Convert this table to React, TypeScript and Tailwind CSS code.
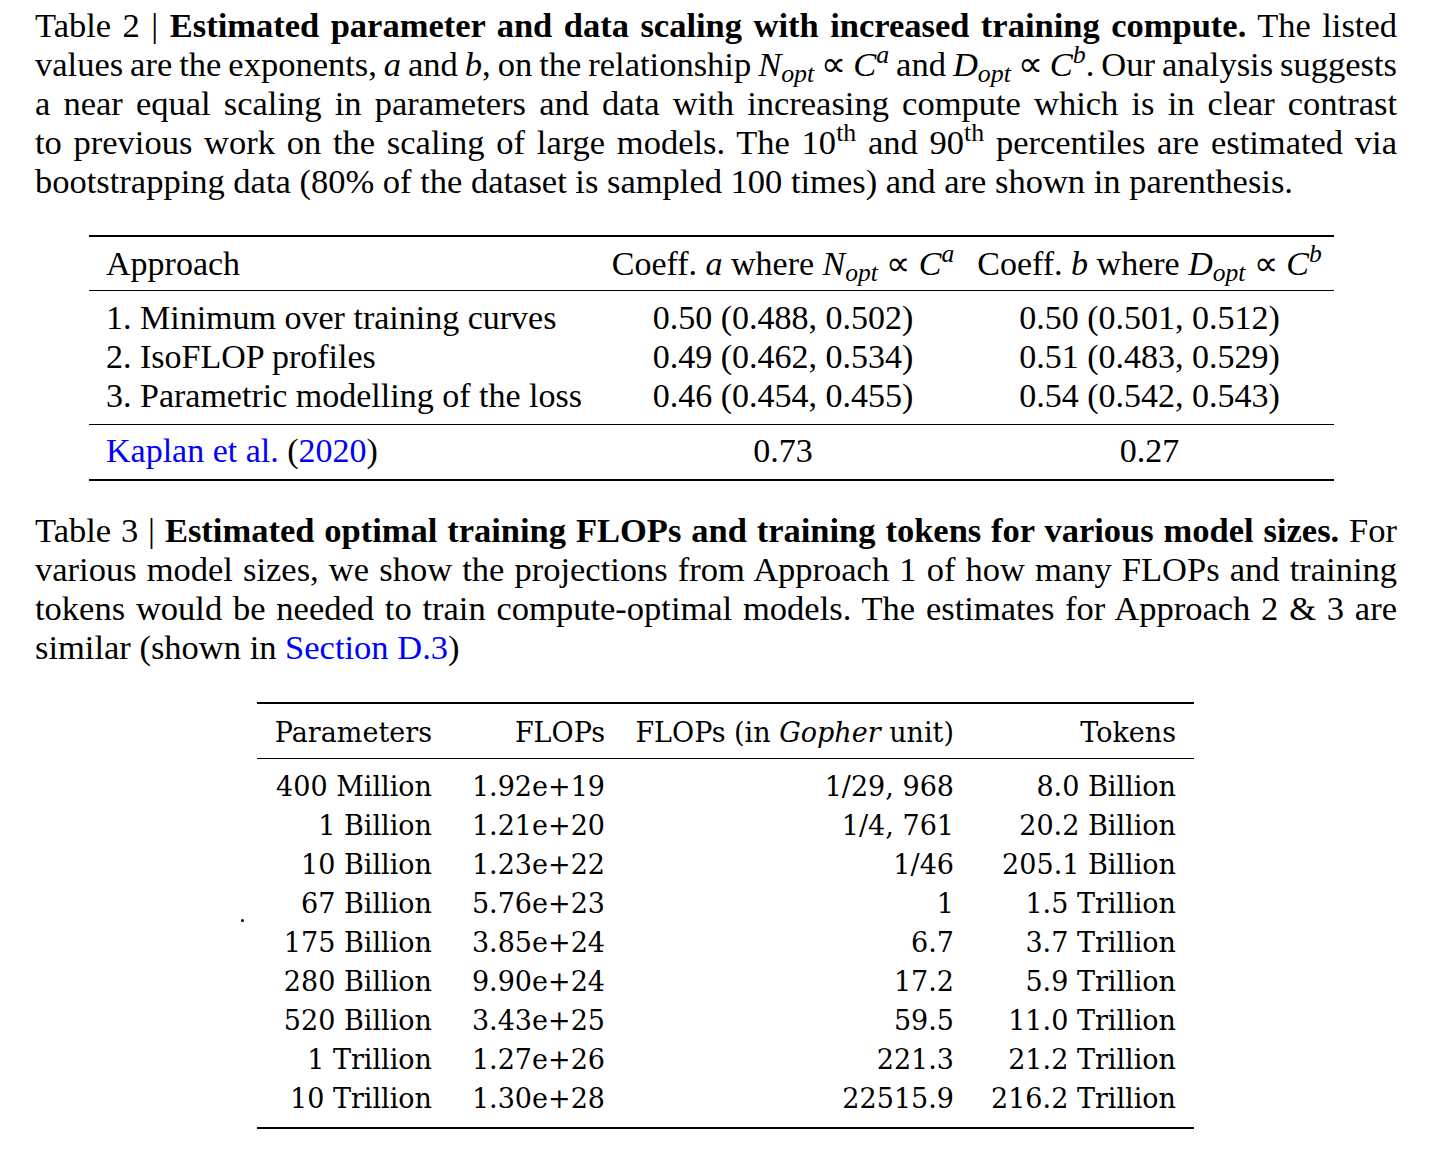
import React from 'react';

type Kids = { children?: React.ReactNode };

// one justified caption line; the last line of a paragraph stays ragged
function Line({ children, last, tight }: Kids & { last?: boolean; tight?: boolean }) {
  const base = last ? "h-[39px]" : "h-[39px] text-justify [text-align-last:justify]";
  return <div className={tight ? base + " [word-spacing:-4px]" : base}>{children}</div>;
}

function Opt({ v }: { v: string }) {
  return (
    <>
      <i>{v}</i>
      <sub className="italic">opt</sub>
    </>
  );
}

function Pow({ e }: { e: string }) {
  return (
    <>
      <i>C</i>
      <sup className="italic">{e}</sup>
    </>
  );
}

const approachRows = [
  ["1. Minimum over training curves", "0.50 (0.488, 0.502)", "0.50 (0.501, 0.512)"],
  ["2. IsoFLOP profiles", "0.49 (0.462, 0.534)", "0.51 (0.483, 0.529)"],
  ["3. Parametric modelling of the loss", "0.46 (0.454, 0.455)", "0.54 (0.542, 0.543)"],
];

const sizeRows = [
  ["400 Million", "1.92e+19", "1/29, 968", "8.0 Billion"],
  ["1 Billion", "1.21e+20", "1/4, 761", "20.2 Billion"],
  ["10 Billion", "1.23e+22", "1/46", "205.1 Billion"],
  ["67 Billion", "5.76e+23", "1", "1.5 Trillion"],
  ["175 Billion", "3.85e+24", "6.7", "3.7 Trillion"],
  ["280 Billion", "9.90e+24", "17.2", "5.9 Trillion"],
  ["520 Billion", "3.43e+25", "59.5", "11.0 Trillion"],
  ["1 Trillion", "1.27e+26", "221.3", "21.2 Trillion"],
  ["10 Trillion", "1.30e+28", "22515.9", "216.2 Trillion"],
];

export default function App() {
  return (
    <div className="relative w-[1440px] h-[1151px] bg-white text-black overflow-hidden font-['Liberation_Serif',serif]">
      {/* Table 2 caption */}
      <div className="ml-[35px] w-[1362px] pt-[6px] text-[34.5px] leading-[39px]">
        <Line>
          Table 2 | <b>Estimated parameter and data scaling with increased training compute.</b> The listed
        </Line>
        <Line tight>
          values are the exponents, <i>a</i> and <i>b</i>, on the relationship <Opt v="N" /> ∝ <Pow e="a" /> and{" "}
          <Opt v="D" /> ∝ <Pow e="b" />. Our analysis suggests
        </Line>
        <Line>a near equal scaling in parameters and data with increasing compute which is in clear contrast</Line>
        <Line>
          to previous work on the scaling of large models. The 10<sup>th</sup> and 90<sup>th</sup> percentiles are estimated via
        </Line>
        <Line last>bootstrapping data (80% of the dataset is sampled 100 times) and are shown in parenthesis.</Line>
      </div>

      {/* Table 2 */}
      <div className="mt-[34px] ml-[89px] w-[1245px] border-t-2 border-b-2 border-black text-[34px] leading-[39px]">
        <div className="grid grid-cols-[512px_364px_369px] h-[54px] pt-[7px] border-b border-black">
          <div className="pl-[17px]">Approach</div>
          <div className="text-center whitespace-nowrap">
            Coeff. <i>a</i> where <Opt v="N" /> ∝ <Pow e="a" />
          </div>
          <div className="text-center whitespace-nowrap">
            Coeff. <i>b</i> where <Opt v="D" /> ∝ <Pow e="b" />
          </div>
        </div>
        <div className="pt-[7px] pb-[9px] border-b border-black">
          {approachRows.map((r) => (
            <div key={r[0]} className="grid grid-cols-[512px_364px_369px] h-[39px]">
              <div className="pl-[17px] whitespace-nowrap">{r[0]}</div>
              <div className="text-center whitespace-nowrap">{r[1]}</div>
              <div className="text-center whitespace-nowrap">{r[2]}</div>
            </div>
          ))}
        </div>
        <div className="grid grid-cols-[512px_364px_369px] pt-[6px] pb-[9px]">
          <div className="pl-[17px]">
            <span className="text-[#0000ff]">Kaplan et al.</span> (<span className="text-[#0000ff]">2020</span>)
          </div>
          <div className="text-center">0.73</div>
          <div className="text-center">0.27</div>
        </div>
      </div>

      {/* Table 3 caption */}
      <div className="ml-[35px] w-[1362px] mt-[30px] text-[34.5px] leading-[39px]">
        <Line>
          Table 3 | <b>Estimated optimal training FLOPs and training tokens for various model sizes.</b> For
        </Line>
        <Line>various model sizes, we show the projections from Approach 1 of how many FLOPs and training</Line>
        <Line>tokens would be needed to train compute-optimal models. The estimates for Approach 2 &amp; 3 are</Line>
        <Line last>
          similar (shown in <span className="text-[#0000ff]">Section D.3</span>)
        </Line>
      </div>

      {/* Table 3 */}
      <div className="mt-[35px] ml-[257px] w-[937px] border-t-2 border-b-2 border-black font-['DejaVu_Serif',serif] text-[27px] leading-[39px]">
        <div className="grid grid-cols-[193px_173px_349px_222px] pt-[9px] pb-[6px] border-b border-black">
          <div className="text-right pr-[18px]">Parameters</div>
          <div className="text-right pr-[18px]">FLOPs</div>
          <div className="text-right pr-[18px] whitespace-nowrap">
            FLOPs (in <i>Gopher</i> unit)
          </div>
          <div className="text-right pr-[18px]">Tokens</div>
        </div>
        <div className="pt-[8px] pb-[9px]">
          {sizeRows.map((r) => (
            <div key={r[0]} className="grid grid-cols-[193px_173px_349px_222px] h-[39px] whitespace-nowrap">
              <div className="text-right pr-[18px]">{r[0]}</div>
              <div className="text-right pr-[18px]">{r[1]}</div>
              <div className="text-right pr-[18px]">{r[2]}</div>
              <div className="text-right pr-[18px]">{r[3]}</div>
            </div>
          ))}
        </div>
      </div>

      {/* stray speck in the scan */}
      <span className="absolute left-[241px] top-[919px] w-[3px] h-[3px] rounded-full bg-black" />
    </div>
  );
}
